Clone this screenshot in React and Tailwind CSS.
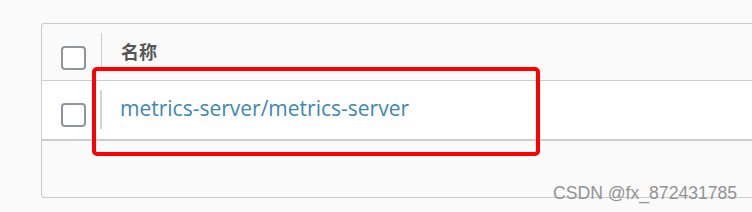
import React from "react";

function Checkbox() {
    return <div className="w-[25px] h-[24px] border-2 border-[#8d969c] rounded-[4px] bg-white" />;
}

export default function App() {
    return (
        <div className="relative w-[752px] h-[212px] overflow-hidden bg-[#fafafa] pt-[23px] pl-[41px]">
            <div className="w-[760px] h-[175px] border border-r-0 border-[#cccccc] rounded-l-[3px] bg-[#fafafa] flex flex-col">
                {/* header */}
                <div className="h-[57px] flex border-b border-[#cccccc]">
                    <div className="w-[59px] flex items-start pt-[22px] pl-[19px]">
                        <Checkbox />
                    </div>
                    <div className="w-px h-[37px] mt-[9px] bg-[#cccccc]" />
                    <div className="pl-[19px] pt-[16px] text-[18px] leading-[22px] font-bold text-[#565656]" style={{ fontFamily: '"Noto Sans CJK SC", sans-serif' }}>
                        名称
                    </div>
                </div>
                {/* row */}
                <div className="h-[60px] flex bg-white border-b-2 border-[#cccccc]">
                    <div className="w-[58px] flex items-start pt-[22px] pl-[19px]">
                        <Checkbox />
                    </div>
                    <div className="w-[2px] h-[39px] mt-[9px] bg-[#d4d4d4]" />
                    <div className="pl-[18px] pt-[13px] text-[21px] leading-[28px] text-[#3e87b3]" style={{ fontFamily: '"Open Sans", sans-serif' }}>
                        metrics-server/metrics-server
                    </div>
                </div>
                <div className="flex-1" />
            </div>

            <div className="absolute left-[92px] top-[67px] w-[448px] h-[89px] border-4 border-[#ff0000] rounded-[5px]" />

            <div className="absolute left-[553px] top-[182px] text-[17.6px] leading-[22px] text-[#939393]" style={{ fontFamily: '"Liberation Sans", Arial, sans-serif' }}>
                CSDN @fx_872431785
            </div>
        </div>
    );
}
